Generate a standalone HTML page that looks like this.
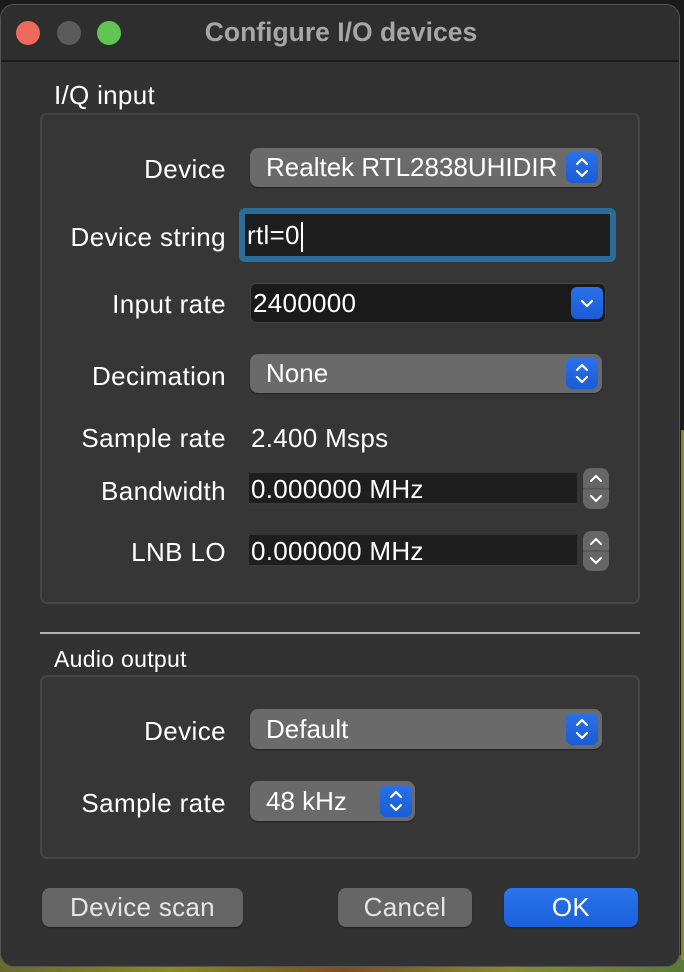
<!DOCTYPE html>
<html><head><meta charset="utf-8">
<style>
*{margin:0;padding:0;box-sizing:border-box}
html,body{width:684px;height:972px;background:#1b1b1b;overflow:hidden;font-family:"Liberation Sans",sans-serif}
.a{position:absolute}
.win{left:0;top:4px;width:680px;height:963px;background:#323232;border-radius:14px;border:1px solid #555;overflow:hidden}
.tb{left:0;top:0;width:680px;height:57px;background:#2e2e2e;border-bottom:2px solid #1a1a1a}
.dot{width:24px;height:24px;border-radius:50%;top:16px}
.title{left:0;width:680px;top:12px;text-align:center;color:#a6a6a6;font-weight:bold;font-size:26.5px}
.lbl{color:#fff;font-size:26px;text-align:right;width:200px;left:26px;letter-spacing:.4px}
.box{background:#363636;border:2px solid #454545;border-radius:7px}
.pop{background:#6a6a6a;border-radius:8px;color:#fff;font-size:26px;padding-left:16px;box-shadow:0 1px 1px rgba(0,0,0,.4);letter-spacing:0}
.blue{background:#1f63d9;border-radius:6px;background:linear-gradient(#2a72ea,#1a5cd4)}
.fld{background:#1e1e1e;color:#fff;font-size:26px;padding-left:2px;border-bottom:2px solid #3a3a3a;letter-spacing:.3px}
.step{background:#666;border-radius:8px}
.btn{background:#666;border-radius:8px;color:#e6e6e6;font-size:26px;text-align:center;box-shadow:0 1px 1px rgba(0,0,0,.4);letter-spacing:.3px}
</style></head><body>
<div class="a" style="left:0;top:955px;width:684px;height:17px;background:linear-gradient(90deg,#6a6a30,#8a8a20,#7a5020,#8a8a30,#5a7a3a)"></div>
<div class="a" style="left:681px;top:430px;width:3px;height:530px;background:#8a8a30"></div>
<div class="a win">
 <div class="a tb"></div>
 <div class="a dot" style="left:15px;background:#ec6a5e"></div>
 <div class="a dot" style="left:56px;background:#5b5b5b"></div>
 <div class="a dot" style="left:96px;background:#61c554"></div>
 <div class="a title">Configure I/O devices</div>
</div>
<div class="a" style="left:54px;top:80px;color:#fff;font-size:26px;letter-spacing:.3px">I/Q input</div>
<div class="a box" style="left:40px;top:113px;width:600px;height:491px"></div>

<div class="a lbl" style="top:154px">Device</div>
<div class="a pop" style="left:250px;top:148px;width:352px;height:39px;line-height:39px">Realtek RTL2838UHIDIR</div>
<div class="a blue" style="left:566px;top:152px;width:32px;height:31px"></div>
<svg class="a" style="left:566px;top:152px" width="32" height="31"><path d="M11 12l5-5 5 5M11 19l5 5 5-5" stroke="#fff" stroke-width="2.2" fill="none" stroke-linecap="round" stroke-linejoin="round"/></svg>

<div class="a lbl" style="top:222px">Device string</div>
<div class="a" style="left:239px;top:208px;width:377px;height:54px;border:6px solid #2b6d98;border-radius:6px"></div>
<div class="a fld" style="left:245px;top:214px;width:365px;height:42px;line-height:42px;border:none">rtl=0<span style="display:inline-block;width:2px;height:30px;background:#fff;vertical-align:middle;margin-left:1px"></span></div>

<div class="a lbl" style="top:289px">Input rate</div>
<div class="a" style="left:250px;top:283px;width:356px;height:40px;background:#1a1a1a;border-radius:6px;border:1px solid #444"></div>
<div class="a" style="left:253px;top:283px;color:#fff;font-size:26px;line-height:40px;letter-spacing:.3px">2400000</div>
<div class="a blue" style="left:571px;top:287px;width:32px;height:32px"></div>
<svg class="a" style="left:571px;top:287px" width="32" height="32"><path d="M11 14l5 5 5-5" stroke="#fff" stroke-width="2.2" fill="none" stroke-linecap="round" stroke-linejoin="round"/></svg>

<div class="a lbl" style="top:361px">Decimation</div>
<div class="a pop" style="left:250px;top:354px;width:352px;height:39px;line-height:39px">None</div>
<div class="a blue" style="left:566px;top:358px;width:32px;height:31px"></div>
<svg class="a" style="left:566px;top:358px" width="32" height="31"><path d="M11 12l5-5 5 5M11 19l5 5 5-5" stroke="#fff" stroke-width="2.2" fill="none" stroke-linecap="round" stroke-linejoin="round"/></svg>

<div class="a lbl" style="top:423px">Sample rate</div>
<div class="a" style="left:251px;top:423px;color:#fff;font-size:26px;letter-spacing:.3px">2.400 Msps</div>

<div class="a lbl" style="top:476px">Bandwidth</div>
<div class="a fld" style="left:249px;top:473px;width:328px;height:32px;line-height:32px">0.000000 MHz</div>
<div class="a step" style="left:583px;top:468px;width:26px;height:41px"></div>
<svg class="a" style="left:583px;top:468px" width="26" height="41"><path d="M0 20.5h26" stroke="#555" stroke-width="1.5"/><path d="M8 13l5-5 5 5M8 28l5 5 5-5" stroke="#fff" stroke-width="2" fill="none" stroke-linecap="round"/></svg>

<div class="a lbl" style="top:537px">LNB LO</div>
<div class="a fld" style="left:249px;top:535px;width:328px;height:32px;line-height:32px">0.000000 MHz</div>
<div class="a step" style="left:583px;top:531px;width:26px;height:40px"></div>
<svg class="a" style="left:583px;top:531px" width="26" height="40"><path d="M0 20h26" stroke="#555" stroke-width="1.5"/><path d="M8 13l5-5 5 5M8 27l5 5 5-5" stroke="#fff" stroke-width="2" fill="none" stroke-linecap="round"/></svg>

<div class="a" style="left:40px;top:632px;width:600px;height:2px;background:#b0b0b0"></div>
<div class="a" style="left:54px;top:646px;color:#fff;font-size:23px;letter-spacing:.3px">Audio output</div>
<div class="a box" style="left:40px;top:675px;width:600px;height:184px"></div>

<div class="a lbl" style="top:716px">Device</div>
<div class="a pop" style="left:250px;top:709px;width:352px;height:40px;line-height:40px">Default</div>
<div class="a blue" style="left:566px;top:713px;width:32px;height:32px"></div>
<svg class="a" style="left:566px;top:713px" width="32" height="32"><path d="M11 12l5-5 5 5M11 20l5 5 5-5" stroke="#fff" stroke-width="2.2" fill="none" stroke-linecap="round" stroke-linejoin="round"/></svg>

<div class="a lbl" style="top:788px">Sample rate</div>
<div class="a pop" style="left:250px;top:781px;width:165px;height:40px;line-height:40px">48 kHz</div>
<div class="a blue" style="left:380px;top:785px;width:32px;height:32px"></div>
<svg class="a" style="left:380px;top:785px" width="32" height="32"><path d="M11 12l5-5 5 5M11 20l5 5 5-5" stroke="#fff" stroke-width="2.2" fill="none" stroke-linecap="round" stroke-linejoin="round"/></svg>

<div class="a btn" style="left:42px;top:888px;width:201px;height:39px;line-height:39px">Device scan</div>
<div class="a btn" style="left:338px;top:888px;width:134px;height:39px;line-height:39px">Cancel</div>
<div class="a btn" style="left:504px;top:888px;width:134px;height:39px;line-height:39px;background:linear-gradient(#2a74ec,#1a60da);color:#fff">OK</div>
</body></html>
